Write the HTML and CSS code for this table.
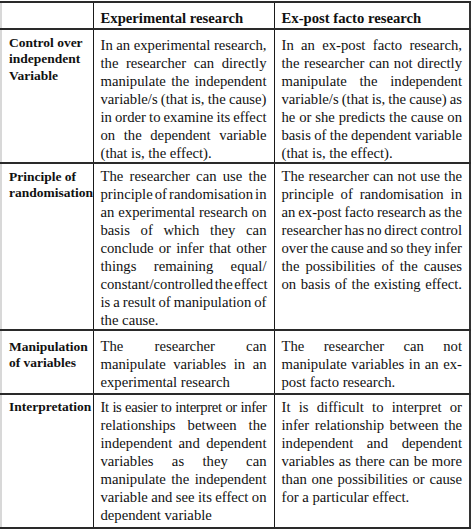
FILE: index.html
```html
<!DOCTYPE html>
<html lang="en">
<head>
<meta charset="utf-8">
<title>Experimental vs Ex-post facto research</title>
<link rel="stylesheet" href="styles.css">
</head>
<body>
<div class="sheet">
<table class="cmp">
  <colgroup><col class="c1"><col class="c2"><col class="c3"></colgroup>
  <thead>
    <tr class="r-head">
      <th class="corner"></th>
      <th class="head">Experimental research</th>
      <th class="head h3">Ex-post facto research</th>
    </tr>
  </thead>
  <tbody>
    <tr class="r1">
      <th class="label">Control over<br>independent<br>Variable</th>
      <td class="txt">
        <span class="ln">In an experimental research,</span>
        <span class="ln">the researcher can directly</span>
        <span class="ln">manipulate the independent</span>
        <span class="ln">variable/s (that is, the cause)</span>
        <span class="ln">in order to examine its effect</span>
        <span class="ln">on the dependent variable</span>
        <span class="end">(that is, the effect).</span>
      </td>
      <td class="txt t3">
        <span class="ln">In an ex-post facto research,</span>
        <span class="ln">the researcher can not directly</span>
        <span class="ln">manipulate the independent</span>
        <span class="ln">variable/s (that is, the cause) as</span>
        <span class="ln">he or she predicts the cause on</span>
        <span class="ln">basis of the dependent variable</span>
        <span class="end">(that is, the effect).</span>
      </td>
    </tr>
    <tr class="r2">
      <th class="label">Principle of<br>randomisation</th>
      <td class="txt">
        <span class="ln">The researcher can use the</span>
        <span class="ln">principle of randomisation in</span>
        <span class="ln">an experimental research on</span>
        <span class="ln">basis of which they can</span>
        <span class="ln">conclude or infer that other</span>
        <span class="ln">things remaining equal/</span>
        <span class="ln">constant/controlled the effect</span>
        <span class="ln">is a result of manipulation of</span>
        <span class="end">the cause.</span>
      </td>
      <td class="txt t3">
        <span class="ln">The researcher can not use the</span>
        <span class="ln">principle of randomisation in</span>
        <span class="ln">an ex-post facto research as the</span>
        <span class="ln">researcher has no direct control</span>
        <span class="ln">over the cause and so they infer</span>
        <span class="ln">the possibilities of the causes</span>
        <span class="ln">on basis of the existing effect.</span>
      </td>
    </tr>
    <tr class="r3">
      <th class="label">Manipulation<br>of variables</th>
      <td class="txt">
        <span class="ln">The researcher can</span>
        <span class="ln">manipulate variables in an</span>
        <span class="end">experimental research</span>
      </td>
      <td class="txt t3">
        <span class="ln">The researcher can not</span>
        <span class="ln">manipulate variables in an ex-</span>
        <span class="end">post facto research.</span>
      </td>
    </tr>
    <tr class="r4">
      <th class="label">Interpretation</th>
      <td class="txt">
        <span class="ln tight">It is easier to interpret or infer</span>
        <span class="ln">relationships between the</span>
        <span class="ln">independent and dependent</span>
        <span class="ln">variables as they can</span>
        <span class="ln">manipulate the independent</span>
        <span class="ln">variable and see its effect on</span>
        <span class="end">dependent variable</span>
      </td>
      <td class="txt t3">
        <span class="ln">It is difficult to interpret or</span>
        <span class="ln">infer relationship between the</span>
        <span class="ln">independent and dependent</span>
        <span class="ln">variables as there can be more</span>
        <span class="ln">than one possibilities or cause</span>
        <span class="end">for a particular effect.</span>
      </td>
    </tr>
  </tbody>
</table>
</div>
</body>
</html>
```
FILE: styles.css
```css
html, body {
  margin: 0;
  padding: 0;
  background: #ffffff;
}

.sheet {
  padding: 1px 3px 0 0;
  font-family: "Liberation Serif", "Times New Roman", serif;
  color: #111111;
  font-size: 14.7px;
  line-height: 18px;
}

.cmp {
  width: 471px;
  table-layout: fixed;
  border-collapse: collapse;
  border-top: 1.5px solid #333;
  border-right: 2px solid #333;
  border-bottom: 2px solid #333;
  border-left: 2px solid #d8d8d8;
}

.c1 { width: 92px; }
.c2 { width: 181px; }
.c3 { width: auto; }

.cmp th,
.cmp td {
  vertical-align: top;
  text-align: left;
  border-top: 2px solid #2a2a2a;
  border-bottom: 2px solid #2a2a2a;
  border-left: 1.5px solid #1a1a1a;
  border-right: 1.5px solid #1a1a1a;
  padding: 0 7px 0 7px;
}

.cmp th:first-child {
  border-left: none;
}

.cmp th {
  font-weight: bold;
}

.label {
  padding-left: 6px;
  padding-right: 0;
  white-space: nowrap;
  font-size: 13.5px;
  line-height: 16.3px;
}

.r-head { height: 27px; }
.r-head th { padding-top: 6px; }
.head { padding-left: 8px; }
.h3 { padding-left: 10px; }

.r1 { height: 134px; }
.r2 { height: 167px; }
.r3 { height: 64px; }
.r4 { height: 134px; }

.r1 > td, .r3 > td { padding-top: 6px; }
.r2 > td, .r4 > td { padding-top: 3px; }

.r1 > .label { padding-top: 5px; }
.r2 > .label { padding-top: 5px; }
.r3 > .label { padding-top: 8px; }
.r4 > .label { padding-top: 4px; }

.txt {
  padding-left: 7px;
  padding-right: 7px;
}

.t3 {
  padding-left: 10px;
  padding-right: 3px;
}

.ln {
  display: block;
  text-align: justify;
  text-align-last: justify;
  word-spacing: -2px;
  white-space: nowrap;
}

.end {
  display: block;
  text-align: left;
  white-space: nowrap;
}

.tight {
  letter-spacing: -0.35px;
}
```
